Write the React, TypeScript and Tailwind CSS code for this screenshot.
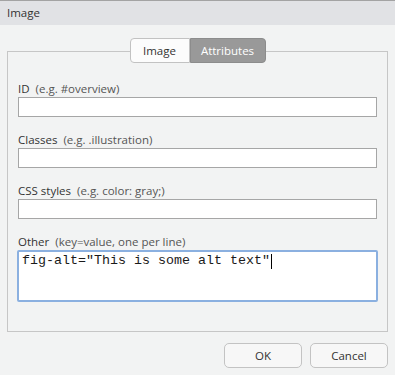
export default function App() {
  const fields = [
    { label: 'ID', hint: '(e.g. #overview)' },
    { label: 'Classes', hint: '(e.g. .illustration)' },
    { label: 'CSS styles', hint: '(e.g. color: gray;)' },
  ]

  return (
    <div
      className="w-[395px] h-[375px] bg-[#f2f3f3] text-[11.5px] text-[#333] overflow-hidden"
      style={{ fontFamily: '"Segoe UI", "Open Sans", sans-serif' }}
    >
      {/* Title bar */}
      <div className="h-[25px] flex items-center px-[7px] bg-[#e1e2e5] border-t border-[#a3a3a3]">
        Image
      </div>

      <div className="px-[7px]">
        {/* Tabs */}
        <div className="flex justify-center mt-[13px] relative z-10">
          <div className="w-[60px] h-[25px] flex items-center justify-center bg-[#fcfcfc] border border-[#c2c2c2] rounded-l-[4px] text-[#333]">
            Image
          </div>
          <div className="w-[76px] h-[25px] flex items-center justify-center bg-[#999999] border border-[#8c8c8c] rounded-r-[4px] text-white">
            Attributes
          </div>
        </div>

        {/* Fieldset */}
        <div className="-mt-[12px] h-[281px] border border-[#c6c6c6] pt-[29px] px-[10px]">
          {fields.map((f) => (
            <div key={f.label} className="h-[51px]">
              <div className="h-[16px] leading-[16px] whitespace-pre">
                {f.label}
                <span className="text-[#555]">{'  ' + f.hint}</span>
              </div>
              <div className="h-[20px] bg-white border border-[#a6a6a6]" />
            </div>
          ))}
          <div className="h-[16px] leading-[16px] whitespace-pre">
            Other
            <span className="text-[#555]">{'  (key=value, one per line)'}</span>
          </div>
          <div className="-ml-[1px] w-[361px] h-[52px] bg-white border-2 border-[#8bb0e0] rounded-[2px] px-[3px] pt-[1px]">
            <div
              className="flex items-center text-[13.33px] leading-[16px] text-[#1a1a1a]"
              style={{ fontFamily: '"Liberation Mono", "Courier New", monospace' }}
            >
              <span className="whitespace-pre">fig-alt="This is some alt text"</span>
              <span className="w-[1px] h-[15px] bg-black ml-[1px]" />
            </div>
          </div>
        </div>

        {/* Buttons */}
        <div className="flex justify-end gap-[8px] mt-[11px]">
          <button className="w-[78px] h-[25px] rounded-[5px] border border-[#c3c3c3] bg-[#f7f7f7] text-[#333]">
            OK
          </button>
          <button className="w-[78px] h-[25px] rounded-[5px] border border-[#c3c3c3] bg-[#f7f7f7] text-[#333]">
            Cancel
          </button>
        </div>
      </div>
    </div>
  )
}
